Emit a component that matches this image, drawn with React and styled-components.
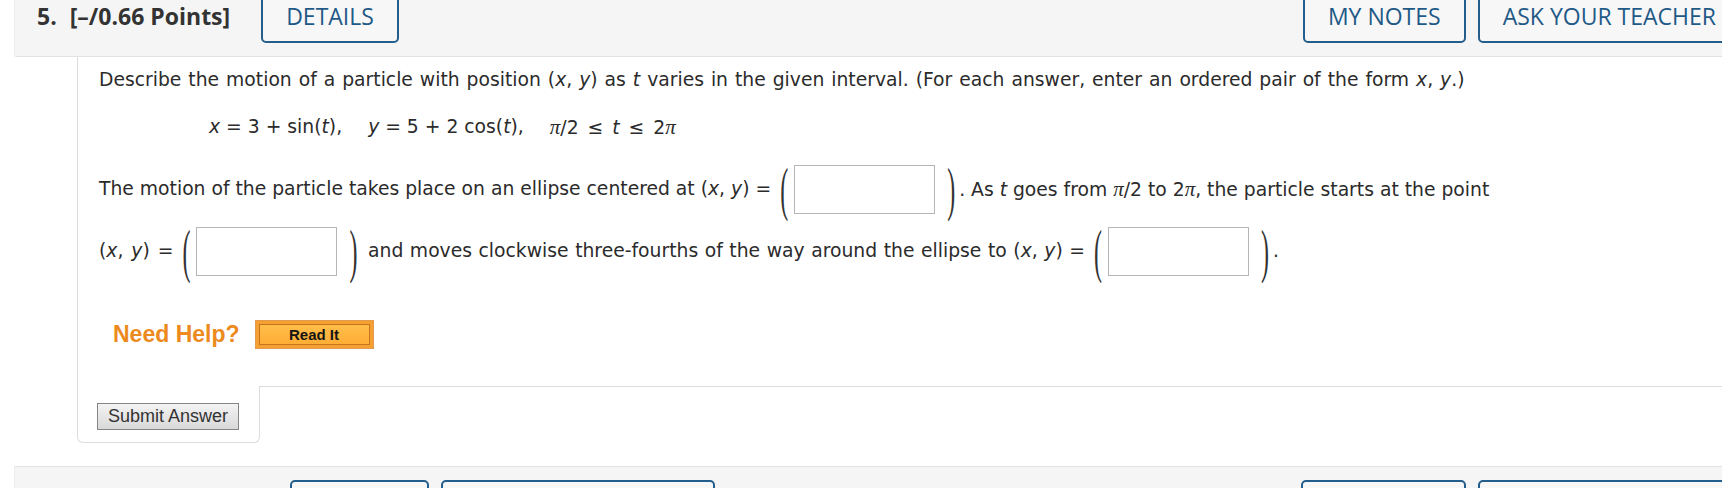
import React from "react";
import styled, { createGlobalStyle, css } from "styled-components";

const GlobalStyle = createGlobalStyle`
  html, body {
    margin: 0;
    padding: 0;
    background: #ffffff;
    overflow: hidden;
  }
  body {
    font-family: "DejaVu Sans", Verdana, sans-serif;
  }
`;

const Page = styled.div`
  width: 1731px;
  margin: -23px 0 0 14px;
`;

const Header = styled.div`
  display: flex;
  align-items: flex-start;
  box-sizing: border-box;
  background: #f5f5f5;
  padding: 13px 4px 0 22px;
  font-family: "Open Sans", "Liberation Sans", sans-serif;
  ${(p) =>
    p.$next
      ? css`
          height: 80px;
          margin-top: 23px;
          border-top: 1px solid #e2e2e2;
          border-left: 1px solid #ececec;
        `
      : css`
          height: 80px;
          border-bottom: 1px solid #e2e2e2;
          border-left: 1px solid #ececec;
          border-bottom-left-radius: 3px;
        `}
`;

const Title = styled.div`
  display: flex;
  gap: 13px;
  margin: 10px 31px 0 0;
  font-weight: 700;
  font-size: 23px;
  line-height: 33px;
  color: #333333;
`;

const Spacer = styled.div`
  width: ${(p) => p.$w}px;
  flex: none;
`;

const Group = styled.div`
  display: flex;
  gap: 12px;
  margin-left: ${(p) => (p.$right ? "auto" : "0")};
`;

const TabButton = styled.button`
  box-sizing: border-box;
  height: 53px;
  margin: 0;
  padding: 8px 23px 0;
  display: flex;
  align-items: flex-start;
  border: 2px solid #245e8c;
  border-radius: 5px;
  background: #f7f7f7;
  font-family: "Open Sans", "Liberation Sans", sans-serif;
  font-size: 23px;
  line-height: 33px;
  font-weight: 400;
  color: #1f5a87;
  white-space: nowrap;
  ${(p) =>
    p.$w &&
    css`
      width: ${p.$w}px;
    `}
`;

const Body = styled.div`
  margin-left: 63px;
  border-left: 1px solid #dcdcdc;
  padding: 11px 0 37px 21px;
  color: #2b2b2b;
  font-size: 18.75px;
`;

const Intro = styled.p`
  margin: 0;
  line-height: 24px;
  white-space: nowrap;
  word-spacing: 1px;
`;

const Equation = styled.div`
  display: flex;
  gap: 26px;
  margin: 23px 0 0 110px;
  line-height: 24px;
  white-space: pre;
`;

const Rel = styled.span`
  margin: 0 3px;
`;

const I = styled.i`
  font-style: italic;
`;

const Pi = styled.span`
  font-family: "Liberation Serif", "Times New Roman", serif;
  font-style: italic;
  font-size: 21px;
`;

const AnswerLine = styled.div`
  display: flex;
  align-items: center;
  height: 54px;
  margin-top: ${(p) => p.$mt}px;
  white-space: pre;
  line-height: 24px;
`;

const Text = styled.span`
  word-spacing: ${(p) => p.$ws || 0}px;
`;

const Paren = styled.span`
  display: inline-block;
  font-family: "Liberation Serif", "Times New Roman", serif;
  font-size: 24px;
  line-height: 24px;
  color: #333333;
  transform: scaleY(2.45);
  margin: ${(p) => (p.$side === "left" ? "0 6px 0 9px" : "0 4px 0 12px")};
`;

const AnswerBox = styled.input`
  box-sizing: border-box;
  width: 141px;
  height: 49px;
  margin: 0;
  padding: 0 6px;
  border: 1px solid #b5b5b5;
  background: #ffffff;
  outline: none;
`;

const HelpRow = styled.div`
  display: flex;
  align-items: center;
  gap: 15px;
  margin-top: 42px;
  padding-left: 14px;
  height: 29px;
`;

const NeedHelp = styled.span`
  font-family: "Liberation Sans", Arial, sans-serif;
  font-weight: 700;
  font-size: 23px;
  color: #ec8a1e;
`;

const ReadIt = styled.button`
  box-sizing: border-box;
  width: 119px;
  height: 29px;
  margin: 0;
  padding: 3px;
  border: 1px solid #e49a4c;
  background: #f5a032;
  cursor: pointer;
`;

const ReadItFace = styled.span`
  box-sizing: border-box;
  display: flex;
  align-items: center;
  justify-content: center;
  height: 100%;
  border: 1px solid #c8731d;
  background: linear-gradient(#ffbe4a, #ffad35);
  font-family: "Liberation Sans", Arial, sans-serif;
  font-weight: 700;
  font-size: 15px;
  color: #141414;
`;

const BottomRow = styled.div`
  display: flex;
  margin-left: 63px;
`;

const SubmitTab = styled.div`
  box-sizing: border-box;
  width: 183px;
  height: 57px;
  padding: 17px 0 0 19px;
  border: 1px solid #dcdcdc;
  border-top: none;
  border-radius: 0 0 6px 6px;
`;

const Rest = styled.div`
  flex: 1;
  height: 0;
  border-top: 1px solid #dcdcdc;
`;

const SubmitButton = styled.button`
  box-sizing: border-box;
  width: 142px;
  height: 27px;
  margin: 0;
  padding: 0;
  border: 1px solid #858585;
  background: linear-gradient(#f3f3f3, #d9d9d9);
  font-family: "Liberation Sans", Arial, sans-serif;
  font-size: 18px;
  line-height: 25px;
  color: #333333;
`;

export default function App() {
  return (
    <>
      <GlobalStyle />
      <Page>
        <Header>
          <Title>
            <span>5.</span>
            <span>[–/0.66 Points]</span>
          </Title>
          <Group>
            <TabButton>DETAILS</TabButton>
          </Group>
          <Group $right>
            <TabButton>MY NOTES</TabButton>
            <TabButton>ASK YOUR TEACHER</TabButton>
          </Group>
        </Header>
        <Body>
          <Intro>
            Describe the motion of a particle with position (<I>x</I>, <I>y</I>) as{" "}
            <I>t</I> varies in the given interval. (For each answer, enter an ordered
            pair of the form <I>x</I>, <I>y</I>.)
          </Intro>
          <Equation>
            <span>
              <I>x</I> = 3 + sin(<I>t</I>),
            </span>
            <span>
              <I>y</I> = 5 + 2 cos(<I>t</I>),
            </span>
            <span>
              <Pi>π</Pi>/2<Rel> ≤ </Rel>
              <I>t</I>
              <Rel> ≤ </Rel>2<Pi>π</Pi>
            </span>
          </Equation>
          <AnswerLine $mt={22}>
            <Text>
              The motion of the particle takes place on an ellipse centered at (<I>x</I>,{" "}
              <I>y</I>) =
            </Text>
            <Paren $side="left">(</Paren>
            <AnswerBox aria-label="center" />
            <Paren $side="right">)</Paren>
            <Text>
              . As <I>t</I> goes from <Pi>π</Pi>/2 to 2<Pi>π</Pi>, the particle starts at
              the point
            </Text>
          </AnswerLine>
          <AnswerLine $mt={8}>
            <Text $ws={2}>
              (<I>x</I>, <I>y</I>) =
            </Text>
            <Paren $side="left">(</Paren>
            <AnswerBox aria-label="start" />
            <Paren $side="right">)</Paren>
            <Text $ws={0.6}>
              {" "}and moves clockwise three-fourths of the way around the ellipse to (
              <I>x</I>, <I>y</I>) =
            </Text>
            <Paren $side="left">(</Paren>
            <AnswerBox aria-label="end" />
            <Paren $side="right">)</Paren>
            <Text>.</Text>
          </AnswerLine>
          <HelpRow>
            <NeedHelp>Need Help?</NeedHelp>
            <ReadIt>
              <ReadItFace>Read It</ReadItFace>
            </ReadIt>
          </HelpRow>
        </Body>
        <BottomRow>
          <SubmitTab>
            <SubmitButton>Submit Answer</SubmitButton>
          </SubmitTab>
          <Rest />
        </BottomRow>
        <Header $next>
          <Spacer $w={253} />
          <Group>
            <TabButton $w={139} aria-label="Details" />
            <TabButton $w={274} aria-label="Previous answers" />
          </Group>
          <Group $right>
            <TabButton $w={165} aria-label="My notes" />
            <TabButton $w={263} aria-label="Ask your teacher" />
          </Group>
        </Header>
      </Page>
    </>
  );
}
